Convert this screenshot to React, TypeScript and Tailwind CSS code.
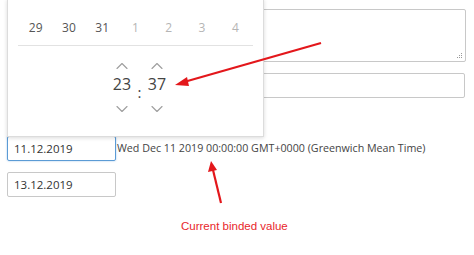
import { ChevronDown, ChevronUp } from 'lucide-react'

const prevDays = ['29', '30', '31']
const nextDays = ['1', '2', '3', '4']

function TimeSpinner({ value }: { value: string }) {
  return (
    <div className="flex w-[24px] flex-col items-center">
      <ChevronUp className="h-[20px] w-[20px] text-[#a0a0a0]" strokeWidth={1.4} />
      <span className="mb-[4px] mt-[-3px] text-[16px] leading-[22px] text-[#444]">{value}</span>
      <ChevronDown className="h-[20px] w-[20px] text-[#a0a0a0]" strokeWidth={1.4} />
    </div>
  )
}

function Arrows() {
  return (
    <svg className="pointer-events-none absolute inset-0" width="474" height="255" viewBox="0 0 474 255">
      <line x1="321" y1="43" x2="184" y2="82" stroke="#e3171b" strokeWidth="2.2" />
      <polygon points="175,85 187,77 189,86" fill="#e3171b" />
      <line x1="221" y1="203" x2="213" y2="170" stroke="#e3171b" strokeWidth="2.2" />
      <polygon points="211,161 208,172 217,170" fill="#e3171b" />
    </svg>
  )
}

export default function App() {
  return (
    <div className="relative h-[255px] w-[474px] overflow-hidden bg-white font-['Open_Sans',sans-serif] text-[#333]">
      <div className="flex flex-col px-[7px] pt-[9px]">
        <div className="relative h-[53px] w-[459px] rounded-[2px] border border-[#c8c8c8]">
          <svg className="absolute bottom-[2px] right-[2px]" width="7" height="7" viewBox="0 0 7 7">
            <rect x="5" y="1" width="1" height="1" fill="#999" />
            <rect x="3" y="3" width="1" height="1" fill="#999" />
            <rect x="5" y="3" width="1" height="1" fill="#999" />
            <rect x="1" y="5" width="1" height="1" fill="#999" />
            <rect x="3" y="5" width="1" height="1" fill="#999" />
            <rect x="5" y="5" width="1" height="1" fill="#999" />
          </svg>
        </div>
        <div className="mt-[11px] h-[25px] w-[458px] rounded-[2px] border border-[#c8c8c8]" />

        <div className="mt-[38px] flex items-center">
          <div className="flex h-[25px] w-[109px] shrink-0 items-center rounded-[2px] border border-[#5b9bd5] pl-[6px] text-[11.5px] shadow-[0_0_2px_rgba(91,155,213,0.6)]">
            11.12.2019
          </div>
          <span className="ml-[1px] whitespace-nowrap text-[10.7px] text-[#444]">
            Wed Dec 11 2019 00:00:00 GMT+0000 (Greenwich Mean Time)
          </span>
        </div>
        <div className="mt-[11px] flex h-[25px] w-[109px] items-center rounded-[2px] border border-[#c8c8c8] pl-[6px] text-[11.5px]">
          13.12.2019
        </div>

        <p className="ml-[174px] mt-[21px] font-['Liberation_Sans',sans-serif] text-[11.5px] text-[#e8262b]">
          Current binded value
        </p>
      </div>

      <div className="absolute left-[7px] top-[-1px] flex h-[138px] w-[257px] flex-col border border-[#dcdcdc] bg-white shadow-[0_1px_4px_rgba(0,0,0,0.15)]">
        <div className="mt-[19px] flex px-[11px] text-[12px]">
          {prevDays.map((d) => (
            <span key={d} className="w-[34px] text-center text-[#555]">
              {d}
            </span>
          ))}
          {nextDays.map((d) => (
            <span key={d} className="w-[34px] text-center text-[#b5b5b5]">
              {d}
            </span>
          ))}
        </div>
        <div className="mx-[10px] mt-[8px] border-t border-[#e2e2e2]" />
        <div className="mt-[10px] flex items-center justify-center gap-[2px] pl-[8px]">
          <TimeSpinner value="23" />
          <span className="mt-[10px] w-[7px] text-center text-[15px] text-[#444]">:</span>
          <TimeSpinner value="37" />
        </div>
      </div>

      <Arrows />
    </div>
  )
}
